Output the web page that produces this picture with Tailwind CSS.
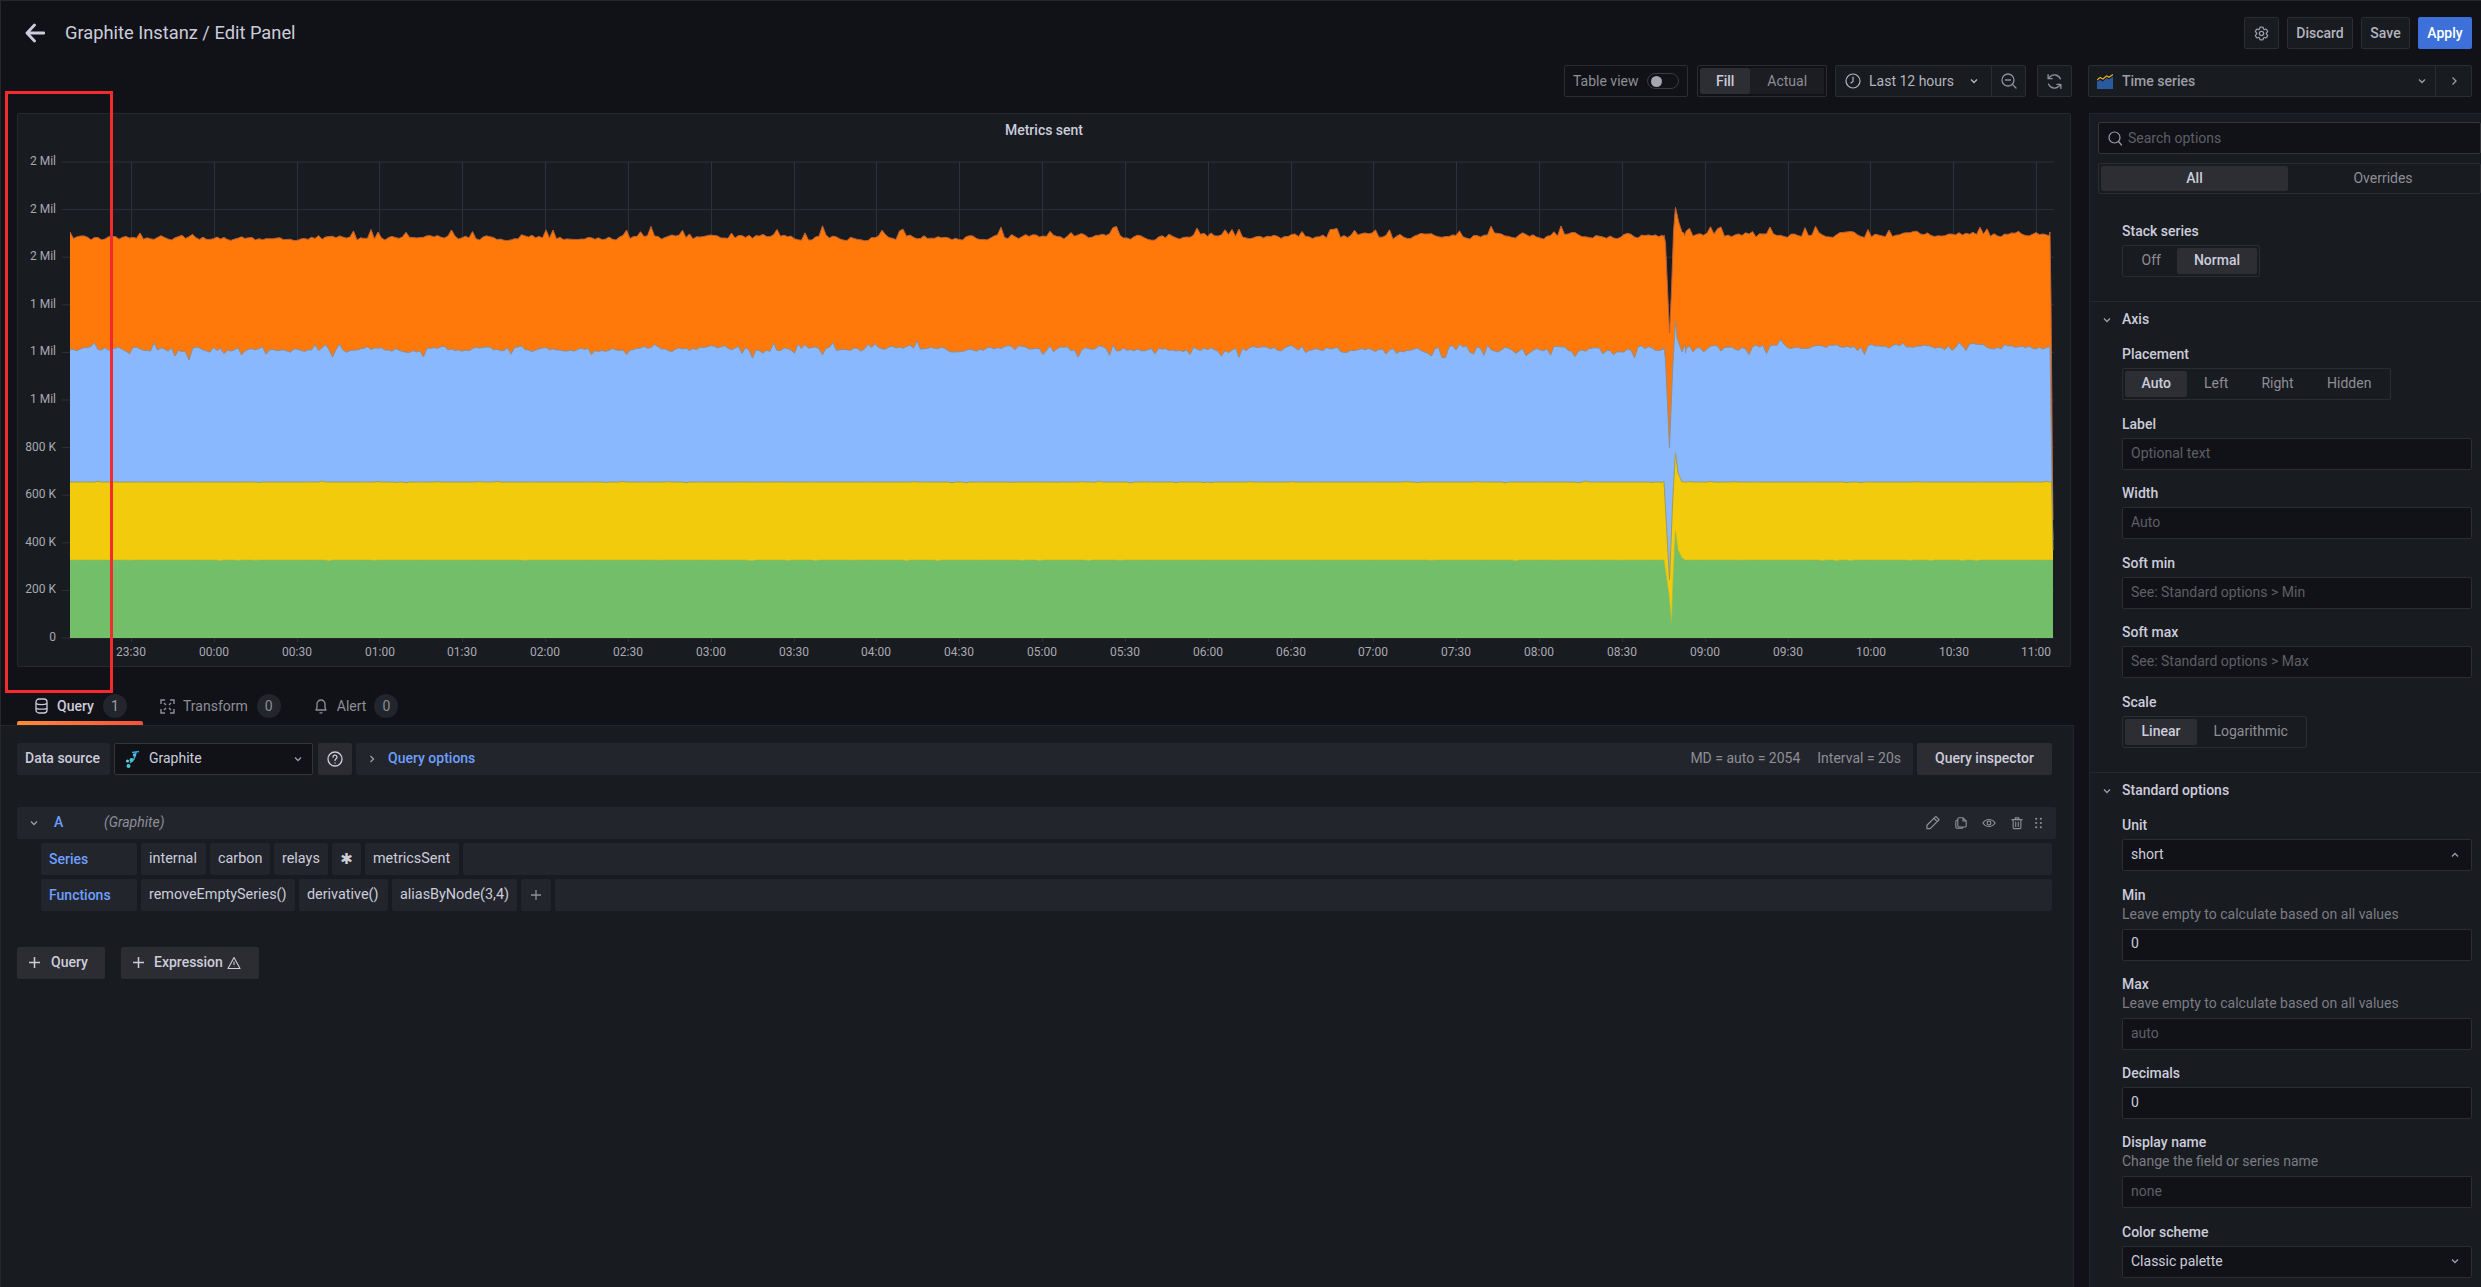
<!DOCTYPE html>
<html lang="en">
<head>
    <meta charset="UTF-8">
    <title>Graphite Instanz / Edit Panel</title>
    <script src="https://cdn.jsdelivr.net/npm/@tailwindcss/browser@4"></script>
</head>
<body class="bg-[#111217]">
<div class="relative w-[2481px] h-[1287px] overflow-hidden bg-[#111217] text-[#ccccdc] text-[14px] font-['Roboto',sans-serif]">

    <!-- Red annotation box -->
    <div class="absolute left-[5px] top-[91px] w-[108px] h-[602px] border-[3px] border-[#f42a2e] z-10"></div>
    <!-- Faint edge of the captured window -->
    <div class="absolute inset-0 border-l border-t border-[#2a2529] pointer-events-none z-10"></div>

    <!-- Header -->
    <div class="h-[65px] pt-[17px] pl-[25px] pr-[9px] flex items-start">
        <div class="h-[32px] flex items-center">
            <svg class="w-[20px] h-[20px] text-[#ccccdc]" viewBox="0 0 20 20" fill="none" stroke="currentColor" stroke-width="2.8" stroke-linecap="round" stroke-linejoin="round"><path d="M9.5 2 2 10l7.5 8M2.500 10H19"/></svg>
            <span class="ml-[20px] pb-[1px] text-[18.3px] text-[#ccccdc]">Graphite Instanz / Edit Panel</span>
        </div>
        <div class="ml-auto flex items-center gap-[8px] font-medium">
            <button class="w-[35px] h-[32px] flex items-center justify-center rounded-[2px] border border-[#2b2d33] bg-[#181b1f] text-[#9d9da8]">
                <svg class="w-[17px] h-[17px]" viewBox="0 0 24 24" fill="none" stroke="currentColor" stroke-width="1.8"><path d="M9.594 3.94c.09-.542.56-.94 1.11-.94h2.593c.55 0 1.02.398 1.11.94l.213 1.281c.063.374.313.686.645.87.074.04.147.083.22.127.325.196.72.257 1.075.124l1.217-.456a1.125 1.125 0 0 1 1.37.49l1.296 2.247a1.125 1.125 0 0 1-.26 1.431l-1.003.827c-.293.241-.438.613-.43.992a7.723 7.723 0 0 1 0 .255c-.008.378.137.75.43.991l1.004.827c.424.35.534.955.26 1.43l-1.298 2.247a1.125 1.125 0 0 1-1.369.491l-1.217-.456c-.355-.133-.75-.072-1.076.124a6.47 6.47 0 0 1-.22.128c-.331.183-.581.495-.644.869l-.213 1.281c-.09.543-.56.94-1.11.94h-2.594c-.55 0-1.019-.398-1.11-.94l-.213-1.281c-.062-.374-.312-.686-.644-.87a6.52 6.52 0 0 1-.22-.127c-.325-.196-.72-.257-1.076-.124l-1.217.456a1.125 1.125 0 0 1-1.369-.49l-1.297-2.247a1.125 1.125 0 0 1 .26-1.431l1.004-.827c.292-.24.437-.613.43-.991a6.932 6.932 0 0 1 0-.255c.007-.38-.138-.751-.43-.992l-1.004-.827a1.125 1.125 0 0 1-.26-1.43l1.297-2.247a1.125 1.125 0 0 1 1.37-.491l1.216.456c.356.133.751.072 1.076-.124.072-.044.146-.086.22-.128.332-.183.582-.495.644-.869l.214-1.28Z"/><circle cx="12" cy="12" r="3"/></svg>
            </button>
            <button class="w-[66px] h-[32px] rounded-[2px] border border-[#2b2d33] bg-[#181b1f] text-[#b4b4bf]">Discard</button>
            <button class="w-[49px] h-[32px] rounded-[2px] border border-[#2b2d33] bg-[#181b1f] text-[#b4b4bf]">Save</button>
            <button class="w-[54px] h-[32px] rounded-[2px] bg-[#3d71d9] text-white">Apply</button>
        </div>
    </div>

    <div class="flex h-[1222px]">
        <!-- Left column -->
        <div class="w-[2088px] shrink-0 flex flex-col">
            <!-- Toolbar -->
            <div class="h-[32px] pr-[16px] flex justify-end items-center text-[#8e8e98]">
                <div class="w-[124px] h-[32px] pl-[8px] flex items-center rounded-[2px] border border-[#2b2d33]">
                    <span>Table view</span>
                    <span class="ml-[8px] w-[32px] h-[16px] pl-[3px] flex items-center rounded-full border border-[#383a40]"><span class="w-[11px] h-[11px] rounded-full bg-[#a5a5ad]"></span></span>
                </div>
                <div class="ml-[9px] w-[130px] h-[32px] p-[2px] flex rounded-[2px] border border-[#2b2d33]">
                    <span class="px-[16px] flex items-center bg-[#2c2e34] rounded-[2px] text-[#ccccdc] font-medium">Fill</span>
                    <span class="flex-1 flex items-center justify-center bg-[#1b1d22]">Actual</span>
                </div>
                <div class="ml-[8px] w-[191px] h-[32px] flex items-center rounded-[2px] border border-[#2b2d33] bg-[#181b1f]">
                    <div class="w-[156px] h-full pl-[9px] pr-[12px] flex items-center border-r border-[#2b2d33] text-[#b4b4bf]">
                        <svg class="w-[16px] h-[16px]" viewBox="0 0 16 16" fill="none" stroke="currentColor" stroke-width="1.2" stroke-linecap="round"><circle cx="8" cy="8" r="7"/><path d="M8 4v4.500L6 10"/></svg>
                        <span class="ml-[8px]">Last 12 hours</span>
                        <svg class="ml-auto w-[10px] h-[10px]" viewBox="0 0 10 10" fill="none" stroke="currentColor" stroke-width="1.400"><path d="m2 3.500 3 3 3-3"/></svg>
                    </div>
                    <svg class="ml-[9px] w-[16px] h-[16px]" viewBox="0 0 16 16" fill="none" stroke="currentColor" stroke-width="1.300" stroke-linecap="round"><circle cx="7" cy="7" r="6"/><path d="M4.500 7h5M11.500 11.500 15 15"/></svg>
                </div>
                <div class="ml-[11px] w-[35px] h-[32px] flex items-center justify-center rounded-[2px] border border-[#2b2d33] bg-[#181b1f]">
                    <svg class="w-[17px] h-[17px]" viewBox="0 0 16 16" fill="none" stroke="currentColor" stroke-width="1.300" stroke-linecap="round" stroke-linejoin="round"><path d="M13.500 5.500A6 6 0 0 0 3.600 3.700L2 5.300M2 1.500v3.800h3.800M2.500 10.500a6 6 0 0 0 9.900 1.800l1.600-1.600M14 14.500v-3.800h-3.800"/></svg>
                </div>
            </div>

            <!-- Chart panel -->
            <div class="mt-[16px] ml-[17px] w-[2054px] h-[554px] flex flex-col shrink-0 rounded-[2px] border border-[#26282e] bg-[#181b1f]">
                <div class="h-[34px] pb-[1px] shrink-0 flex items-center justify-center font-medium">Metrics sent</div>
                <svg class="block" width="2052" height="518" viewBox="18 148 2052 518" font-family="Roboto, sans-serif">
                    <path id="grid" fill="none" stroke="#2e3137" stroke-width="1"/>
                    <path id="s-orange" fill="#ff780a"/>
                    <path id="e-orange" fill="none" stroke="#b8603a" stroke-width="1"/>
                    <path id="s-blue" fill="#8ab8ff"/>
                    <path id="e-blue" fill="none" stroke="#8e8f8f" stroke-width="1"/>
                    <path id="s-yellow" fill="#f2cc0c"/>
                    <path id="e-yellow" fill="none" stroke="#a09c50" stroke-width="1"/>
                    <path id="s-green" fill="#73bf69"/>
                    <path id="e-green" fill="none" stroke="#a8b840" stroke-width="0.6"/>
                    <g fill="#a9a9b3" font-size="12" text-anchor="end">
                        <text x="56" y="165">2 Mil</text>
                        <text x="56" y="213">2 Mil</text>
                        <text x="56" y="260">2 Mil</text>
                        <text x="56" y="308">1 Mil</text>
                        <text x="56" y="355">1 Mil</text>
                        <text x="56" y="403">1 Mil</text>
                        <text x="56" y="451">800 K</text>
                        <text x="56" y="498">600 K</text>
                        <text x="56" y="546">400 K</text>
                        <text x="56" y="593">200 K</text>
                        <text x="56" y="641">0</text>
                    </g>
                    <g fill="#a9a9b3" font-size="12" text-anchor="middle">
                        <text x="131" y="656">23:30</text>
                        <text x="214" y="656">00:00</text>
                        <text x="297" y="656">00:30</text>
                        <text x="380" y="656">01:00</text>
                        <text x="462" y="656">01:30</text>
                        <text x="545" y="656">02:00</text>
                        <text x="628" y="656">02:30</text>
                        <text x="711" y="656">03:00</text>
                        <text x="794" y="656">03:30</text>
                        <text x="876" y="656">04:00</text>
                        <text x="959" y="656">04:30</text>
                        <text x="1042" y="656">05:00</text>
                        <text x="1125" y="656">05:30</text>
                        <text x="1208" y="656">06:00</text>
                        <text x="1291" y="656">06:30</text>
                        <text x="1373" y="656">07:00</text>
                        <text x="1456" y="656">07:30</text>
                        <text x="1539" y="656">08:00</text>
                        <text x="1622" y="656">08:30</text>
                        <text x="1705" y="656">09:00</text>
                        <text x="1788" y="656">09:30</text>
                        <text x="1871" y="656">10:00</text>
                        <text x="1954" y="656">10:30</text>
                        <text x="2036" y="656">11:00</text>
                    </g>
                </svg>
            </div>

            <!-- Tabs -->
            <div class="ml-[17px] h-[58px] flex shrink-0 text-[#8e8e98]">
                <div class="relative h-[58px] pt-[20px] pl-[18px] pr-[16px] w-[126px]">
                    <div class="h-[38px] flex items-center text-[#ccccdc] font-medium">
                        <svg class="w-[13px] h-[16px]" viewBox="0 0 13 16" fill="none" stroke="currentColor" stroke-width="1.300"><rect x="1" y="1" width="11" height="14" rx="3"/><path d="M1 5.700c2.500 1.200 8.500 1.200 11 0M1 10.300c2.500 1.200 8.500 1.200 11 0"/></svg>
                        <span class="ml-[9px]">Query</span>
                        <span class="ml-[9px] w-[24px] h-[24px] rounded-full bg-[#22252b] flex items-center justify-center font-normal text-[#9d9da8]">1</span>
                    </div>
                    <div class="absolute left-0 right-0 bottom-0 h-[4px] rounded-t-[2px] bg-linear-to-r from-[#ff8a35] to-[#f5503a]"></div>
                </div>
                <div class="h-[58px] pt-[20px] pl-[17px] pr-[16px]">
                    <div class="h-[38px] flex items-center">
                        <svg class="w-[15px] h-[15px]" viewBox="0 0 15 15" fill="none" stroke="currentColor" stroke-width="1.400"><path d="M1 5V1h4M10 1h4v4M14 10v4h-4M5 14H1v-4M4 4l2 2M11 4 9 6M11 11 9 9M4 11l2-2"/></svg>
                        <span class="ml-[8px]">Transform</span>
                        <span class="ml-[9px] w-[24px] h-[24px] rounded-full bg-[#22252b] flex items-center justify-center">0</span>
                    </div>
                </div>
                <div class="h-[58px] pt-[20px] pl-[18px]">
                    <div class="h-[38px] flex items-center">
                        <svg class="w-[12px] h-[15px]" viewBox="0 0 12 15" fill="none" stroke="currentColor" stroke-width="1.300" stroke-linejoin="round"><path d="M6 1a4 4 0 0 0-4 4v3.500L1 11h10L10 8.500V5a4 4 0 0 0-4-4ZM4.500 13.800h3"/></svg>
                        <span class="ml-[10px]">Alert</span>
                        <span class="ml-[8px] w-[24px] h-[24px] rounded-full bg-[#22252b] flex items-center justify-center">0</span>
                    </div>
                </div>
            </div>

            <!-- Query section -->
            <div class="flex-1 w-[2074px] pt-[17px] pl-[17px] pr-[17px] bg-[#181b1f] border-t border-r border-[#22252b]">
                <div class="h-[32px] pr-[4px] flex gap-[4px]">
                    <div class="w-[93px] pb-[1px] flex items-center pl-[8px] rounded-[2px] bg-[#22252b] font-medium">Data source</div>
                    <div class="w-[199px] pb-[1px] flex items-center pl-[10px] rounded-[2px] bg-[#111217] border border-[#33353b]">
                        <svg class="w-[15px] h-[20px]" viewBox="0 0 15 20" fill="none"><path d="M7 3.500 14 2.500M11.500 2.500 9 10 5 14" stroke="#33a2e5" stroke-width="1.500"/><circle cx="9.500" cy="6" r="1.700" fill="#4fc4cf"/><circle cx="6.500" cy="11" r="2" fill="#4fc4cf"/><circle cx="2.500" cy="12" r="1.500" fill="#6ed0e0"/><circle cx="3.500" cy="17" r="2" fill="#4fc4cf"/></svg>
                        <span class="ml-[9px] text-[#ccccdc]">Graphite</span>
                        <svg class="ml-auto mr-[9px] w-[10px] h-[10px] text-[#9d9da8]" viewBox="0 0 10 10" fill="none" stroke="currentColor" stroke-width="1.300"><path d="m2 3.500 3 3 3-3"/></svg>
                    </div>
                    <div class="w-[34px] ml-[1px] flex items-center justify-center rounded-[2px] bg-[#2a2c32] text-[#ccccdc]">
                        <svg class="w-[16px] h-[16px]" viewBox="0 0 16 16" fill="none" stroke="currentColor" stroke-width="1.300" stroke-linecap="round"><circle cx="8" cy="8" r="7"/><path d="M6 6.200a2 2 0 1 1 3 1.700c-.7.400-1 .8-1 1.500M8 11.800v.2"/></svg>
                    </div>
                    <div class="flex-1 pb-[1px] flex items-center pl-[11px] pr-[12px] rounded-[2px] bg-[#22252b]">
                        <svg class="w-[10px] h-[10px] text-[#9d9da8]" viewBox="0 0 10 10" fill="none" stroke="currentColor" stroke-width="1.300"><path d="m3.500 2 3 3-3 3"/></svg>
                        <span class="ml-[11px] text-[#6e9fff] font-medium">Query options</span>
                        <span class="ml-auto text-[#8e8e98]">MD = auto = 2054</span>
                        <span class="ml-[17px] text-[#8e8e98]">Interval = 20s</span>
                    </div>
                    <button class="w-[135px] pb-[1px] rounded-[2px] bg-[#2c2d33] font-medium">Query inspector</button>
                </div>

                <div class="mt-[32px] h-[32px] pb-[1px] flex items-center rounded-[2px] bg-[#22252b] pl-[12px] pr-[14px]">
                    <svg class="w-[10px] h-[10px] text-[#9d9da8]" viewBox="0 0 10 10" fill="none" stroke="currentColor" stroke-width="1.300"><path d="m2 3.500 3 3 3-3"/></svg>
                    <span class="ml-[15px] w-[50px] text-[#6e9fff] font-medium">A</span>
                    <span class="italic text-[#8e8e98]">(Graphite)</span>
                    <div class="ml-auto flex items-center gap-[15px] text-[#8e8e98]">
                        <svg class="w-[14px] h-[15px]" viewBox="0 0 15 15" fill="none" stroke="currentColor" stroke-width="1.300" stroke-linejoin="round"><path d="M1 14v-3.500L10.500 1 14 4.500 4.500 14H1ZM8.500 3l3.500 3.500"/></svg>
                        <svg class="w-[12px] h-[14px]" viewBox="0 0 15 15" fill="none" stroke="currentColor" stroke-width="1.400" stroke-linejoin="round"><path d="M5 1h5l4 4v6a1.500 1.500 0 0 1-1.500 1.500H5A1.500 1.500 0 0 1 3.500 11V2.500A1.500 1.500 0 0 1 5 1ZM10 1v4h4M3.500 4H2.500A1.500 1.500 0 0 0 1 5.500v7A1.500 1.500 0 0 0 2.500 14h6a1.500 1.500 0 0 0 1.500-1.500"/></svg>
                        <svg class="w-[14px] h-[14px]" viewBox="0 0 15 15" fill="none" stroke="currentColor" stroke-width="1.300"><path d="M1 7.500C4.500 2.500 10.500 2.500 14 7.500 10.500 12.500 4.500 12.500 1 7.500Z"/><circle cx="7.500" cy="7.500" r="2"/></svg>
                        <svg class="w-[12px] h-[14px]" viewBox="0 0 14 15" fill="none" stroke="currentColor" stroke-width="1.300" stroke-linecap="round"><path d="M1 3.500h12M5 3.500V1.500h4v2M2.500 3.500V13a1 1 0 0 0 1 1h7a1 1 0 0 0 1-1V3.500M5.500 6.500v5M8.500 6.500v5"/></svg>
                        <svg class="-ml-[3px] w-[7px] h-[14px]" viewBox="0 0 9 15" fill="currentColor"><circle cx="1.500" cy="2" r="1.400"/><circle cx="7.500" cy="2" r="1.400"/><circle cx="1.500" cy="7.500" r="1.400"/><circle cx="7.500" cy="7.500" r="1.400"/><circle cx="1.500" cy="13" r="1.400"/><circle cx="7.500" cy="13" r="1.400"/></svg>
                    </div>
                </div>

                <div class="mt-[4px] ml-[24px] mr-[4px] h-[32px] flex gap-[4px] text-[14.4px]">
                    <div class="w-[96px] pl-[8px] flex items-center rounded-[2px] bg-[#22252b] text-[#6e9fff] text-[14px] font-medium">Series</div>
                    <div class="w-[65px] pl-[8px] flex items-center rounded-[2px] bg-[#22252b]">internal</div>
                    <div class="w-[60px] pl-[8px] flex items-center rounded-[2px] bg-[#22252b]">carbon</div>
                    <div class="w-[54px] pl-[8px] flex items-center rounded-[2px] bg-[#22252b]">relays</div>
                    <div class="w-[29px] flex items-center justify-center rounded-[2px] bg-[#22252b] font-['DejaVu_Sans',sans-serif] text-[15px]">✱</div>
                    <div class="w-[94px] pl-[8px] flex items-center rounded-[2px] bg-[#22252b]">metricsSent</div>
                    <div class="flex-1 rounded-[2px] bg-[#22252b]"></div>
                </div>
                <div class="mt-[4px] ml-[24px] mr-[4px] h-[32px] flex gap-[4px] text-[14.4px]">
                    <div class="w-[96px] pl-[8px] flex items-center rounded-[2px] bg-[#22252b] text-[#6e9fff] text-[14px] font-medium">Functions</div>
                    <div class="w-[154px] pl-[8px] flex items-center rounded-[2px] bg-[#22252b]">removeEmptySeries()</div>
                    <div class="w-[89px] pl-[8px] flex items-center rounded-[2px] bg-[#22252b]">derivative()</div>
                    <div class="w-[125px] pl-[8px] flex items-center rounded-[2px] bg-[#22252b]">aliasByNode(3,4)</div>
                    <div class="w-[30px] flex items-center justify-center rounded-[2px] bg-[#22252b] text-[#8e8e98]">
                        <svg class="w-[10px] h-[10px]" viewBox="0 0 10 10" stroke="currentColor" stroke-width="1.300"><path d="M5 0v10M0 5h10"/></svg>
                    </div>
                    <div class="flex-1 rounded-[2px] bg-[#22252b]"></div>
                </div>

                <div class="mt-[36px] h-[32px] flex gap-[16px] font-medium">
                    <button class="w-[88px] pb-[1px] pl-[12px] flex items-center rounded-[2px] bg-[#2c2d33]">
                        <svg class="w-[11px] h-[11px]" viewBox="0 0 11 11" stroke="currentColor" stroke-width="1.500"><path d="M5.500 0v11M0 5.500h11"/></svg>
                        <span class="ml-[11px]">Query</span>
                    </button>
                    <button class="w-[138px] pb-[1px] pl-[12px] flex items-center rounded-[2px] bg-[#2c2d33]">
                        <svg class="w-[11px] h-[11px]" viewBox="0 0 11 11" stroke="currentColor" stroke-width="1.500"><path d="M5.500 0v11M0 5.500h11"/></svg>
                        <span class="ml-[10px]">Expression</span>
                        <svg class="ml-[4px] w-[14px] h-[14px]" viewBox="0 0 14 14" fill="none" stroke="currentColor" stroke-width="1.100" stroke-linejoin="round"><path d="M7 1.500 13 12.500H1L7 1.500ZM7 5.500v3.500M7 10.500v.3"/></svg>
                    </button>
                </div>
            </div>
        </div>

        <!-- Right column -->
        <div class="flex-1 min-w-0 flex flex-col">
            <div class="mr-[9px] h-[32px] flex items-center rounded-[2px] border border-[#2b2d33] bg-[#181b1f] text-[#9d9da8] shrink-0">
                <div class="flex-1 h-full pl-[8px] flex items-center border-r border-[#2b2d33]">
                    <svg class="w-[16px] h-[15px]" viewBox="0 0 16 15"><path d="M0 7.500 3 6l3 1.500L9.500 4l2.500 1.500L16 2.500V15H0Z" fill="#2a5a9e"/><path d="M0 6 3 3.500l3 1.500L9.500 2l2.500 1.200L16 .5" fill="none" stroke="#e8a620" stroke-width="1.300"/></svg>
                    <span class="ml-[9px] font-medium">Time series</span>
                    <svg class="ml-auto mr-[8px] w-[10px] h-[10px]" viewBox="0 0 10 10" fill="none" stroke="currentColor" stroke-width="1.300"><path d="m2 3.500 3 3 3-3"/></svg>
                </div>
                <div class="w-[35px] flex items-center justify-center">
                    <svg class="w-[10px] h-[10px]" viewBox="0 0 10 10" fill="none" stroke="currentColor" stroke-width="1.300"><path d="m3.500 1.500 3.500 3.500-3.500 3.500"/></svg>
                </div>
            </div>

            <div class="mt-[16px] ml-[1px] flex-1 min-h-0 w-[392px] pt-[8px] bg-[#181b1f] border-l border-t border-[#22252b] overflow-hidden">
                <div class="ml-[8px] w-[383px] h-[32px] pl-[9px] flex items-center rounded-[2px] bg-[#111217] border border-[#33353b]">
                    <svg class="w-[14px] h-[15px] text-[#9d9da8]" viewBox="0 0 14 15" fill="none" stroke="currentColor" stroke-width="1.200" stroke-linecap="round"><circle cx="6.500" cy="6.500" r="5.500"/><path d="m10.500 10.500 3 3.500"/></svg>
                    <span class="ml-[6px] text-[#5e5f66]">Search options</span>
                </div>
                <div class="mt-[8.500px] ml-[8px] w-[383px] h-[31px] p-[2px] flex rounded-[2px] border border-[#2b2d33]">
                    <div class="w-[187px] flex items-center justify-center rounded-[2px] bg-[#2c2e34] font-medium">All</div>
                    <div class="flex-1 flex items-center justify-center text-[#8e8e98]">Overrides</div>
                </div>

                <div class="mt-[27.500px] ml-[32px] h-[20px] flex items-center font-medium">Stack series</div>
                <div class="mt-[3.500px] ml-[32px] w-fit h-[32px] p-[2px] flex rounded-[2px] border border-[#2b2d33] text-[#8e8e98]">
                    <div class="px-[16.500px] flex items-center">Off</div>
                    <div class="px-[16.500px] flex items-center rounded-[2px] bg-[#2c2e34] text-[#ccccdc] font-medium">Normal</div>
                </div>

                <!-- Axis -->
                <div class="mt-[24px] border-t border-[#26282e] pt-[8px] pb-[24px]">
                    <div class="h-[20px] mb-[15px] pl-[12px] flex items-center font-medium">
                        <svg class="w-[10px] h-[10px] text-[#9d9da8]" viewBox="0 0 10 10" fill="none" stroke="currentColor" stroke-width="1.300"><path d="m2 3.500 3 3 3-3"/></svg>
                        <span class="ml-[10px]">Axis</span>
                    </div>
                    <div class="ml-[32px] w-[350px]">
                        <div class="h-[20px] mb-[3px] flex items-center font-medium">Placement</div>
                        <div class="w-fit h-[32px] mb-[14.500px] p-[2px] flex rounded-[2px] border border-[#2b2d33] text-[#8e8e98]">
                            <div class="px-[16.500px] flex items-center rounded-[2px] bg-[#2c2e34] text-[#ccccdc] font-medium">Auto</div>
                            <div class="px-[16.500px] flex items-center">Left</div>
                            <div class="px-[16.500px] flex items-center">Right</div>
                            <div class="px-[17px] flex items-center">Hidden</div>
                        </div>
                        <div class="h-[20px] mb-[3.500px] flex items-center font-medium">Label</div>
                        <div class="h-[32px] mb-[14px] pl-[8px] flex items-center rounded-[2px] bg-[#111217] border border-[#2b2d33] text-[#5e5f66]">Optional text</div>
                        <div class="h-[20px] mb-[3.500px] flex items-center font-medium">Width</div>
                        <div class="h-[32px] mb-[14px] pl-[8px] pb-[1px] flex items-center rounded-[2px] bg-[#111217] border border-[#2b2d33] text-[#5e5f66]">Auto</div>
                        <div class="h-[20px] mb-[3.500px] flex items-center font-medium">Soft min</div>
                        <div class="h-[32px] mb-[14px] pl-[8px] flex items-center rounded-[2px] bg-[#111217] border border-[#2b2d33] text-[#5e5f66]">See: Standard options &gt; Min</div>
                        <div class="h-[20px] mb-[3.500px] flex items-center font-medium">Soft max</div>
                        <div class="h-[32px] mb-[14px] pl-[8px] pb-[1px] flex items-center rounded-[2px] bg-[#111217] border border-[#2b2d33] text-[#5e5f66]">See: Standard options &gt; Max</div>
                        <div class="h-[20px] mb-[3.500px] flex items-center font-medium">Scale</div>
                        <div class="w-fit h-[32px] p-[2px] flex rounded-[2px] border border-[#2b2d33] text-[#8e8e98]">
                            <div class="px-[16.500px] flex items-center rounded-[2px] bg-[#2c2e34] text-[#ccccdc] font-medium">Linear</div>
                            <div class="px-[16.500px] flex items-center">Logarithmic</div>
                        </div>
                    </div>
                </div>

                <!-- Standard options -->
                <div class="border-t border-[#26282e] pt-[8px]">
                    <div class="h-[20px] mb-[15px] pl-[12px] flex items-center font-medium">
                        <svg class="w-[10px] h-[10px] text-[#9d9da8]" viewBox="0 0 10 10" fill="none" stroke="currentColor" stroke-width="1.300"><path d="m2 3.500 3 3 3-3"/></svg>
                        <span class="ml-[10px]">Standard options</span>
                    </div>
                    <div class="ml-[32px] w-[350px]">
                        <div class="h-[20px] mb-[3.500px] flex items-center font-medium">Unit</div>
                        <div class="h-[32px] mb-[14px] pl-[8px] pr-[11px] pb-[1px] flex items-center justify-between rounded-[2px] bg-[#111217] border border-[#2b2d33]">
                            <span>short</span>
                            <svg class="w-[10px] h-[10px] text-[#9d9da8]" viewBox="0 0 10 10" fill="none" stroke="currentColor" stroke-width="1.300"><path d="m2 6.500 3-3 3 3"/></svg>
                        </div>
                        <div class="h-[20px] flex items-center font-medium">Min</div>
                        <div class="h-[18px] mb-[5.500px] flex items-center text-[#7c7c86]">Leave empty to calculate based on all values</div>
                        <div class="h-[32px] mb-[14px] pl-[8px] pb-[2px] flex items-center rounded-[2px] bg-[#111217] border border-[#2b2d33]">0</div>
                        <div class="h-[20px] flex items-center font-medium">Max</div>
                        <div class="h-[18px] mb-[5.500px] flex items-center text-[#7c7c86]">Leave empty to calculate based on all values</div>
                        <div class="h-[32px] mb-[13px] pl-[8px] pb-[2px] flex items-center rounded-[2px] bg-[#111217] border border-[#2b2d33] text-[#5e5f66]">auto</div>
                        <div class="h-[20px] mb-[3.500px] flex items-center font-medium">Decimals</div>
                        <div class="h-[32px] mb-[14px] pl-[8px] pb-[1px] flex items-center rounded-[2px] bg-[#111217] border border-[#2b2d33]">0</div>
                        <div class="h-[20px] flex items-center font-medium">Display name</div>
                        <div class="h-[18px] mb-[5.500px] flex items-center text-[#7c7c86]">Change the field or series name</div>
                        <div class="h-[32px] mb-[14px] pl-[8px] pb-[1px] flex items-center rounded-[2px] bg-[#111217] border border-[#2b2d33] text-[#5e5f66]">none</div>
                        <div class="h-[20px] mb-[3.500px] flex items-center font-medium">Color scheme</div>
                        <div class="h-[32px] pl-[8px] pr-[11px] pb-[1px] flex items-center justify-between rounded-[2px] bg-[#111217] border border-[#2b2d33]">
                            <span>Classic palette</span>
                            <svg class="w-[10px] h-[10px] text-[#9d9da8]" viewBox="0 0 10 10" fill="none" stroke="currentColor" stroke-width="1.300"><path d="m2 3.500 3 3 3-3"/></svg>
                        </div>
                    </div>
                </div>
            </div>
        </div>
    </div>
</div>

<script>
    // seeded noise so the chart is the same on every render
    let seed = 1234567;
    function rnd() {
        seed = (seed + 0x6D2B79F5) | 0;
        let t = Math.imul(seed ^ (seed >>> 15), 1 | seed);
        t = (t + Math.imul(t ^ (t >>> 7), 61 | t)) ^ t;
        return ((t ^ (t >>> 14)) >>> 0) / 4294967296;
    }

    const X0 = 70, X1 = 2053, BASE = 638;

    // grid lines
    let grid = '';
    for (let i = 0; i <= 10; i++) {
        const y = 162 + i * 47.6;
        grid += 'M62 ' + y + 'H2054';
    }
    for (let i = 0; i < 24; i++) {
        const x = Math.round(131 + i * 82.83) + 0.5;
        grid += 'M' + x + ' 162V642';
    }
    document.getElementById('grid').setAttribute('d', grid);

    const xs = [];
    for (let x = X0; x < 1662; x += 3.5) xs.push(x);
    for (let x = 1662; x < 1686; x += 0.5) xs.push(x);
    for (let x = 1686; x < 2049; x += 3.5) xs.push(x);
    for (let x = 2049; x <= X1; x += 0.5) xs.push(x);

    let walkO = 0, walkB = 0;

    function orangeNoise(x) {
        const base = x < 1664 ? 238.5 - 3 * (x - X0) / 1600 : 234;
        walkO = walkO * 0.55 + (rnd() - 0.5) * 4.5;
        let y = base + walkO;
        const r = rnd();
        if (r < 0.13) y -= 3 + rnd() * 6;
        return y;
    }
    function blueNoise(x) {
        const base = x < 1664 ? 349 : 347;
        walkB = walkB * 0.55 + (rnd() - 0.5) * 4.5;
        let y = base + walkB;
        const r = rnd();
        if (r < 0.1) y += 3 + rnd() * 6;
        else if (r < 0.18) y -= 2 + rnd() * 4;
        return y;
    }
    function yellowNoise() {
        return 482 + (rnd() < 0.1 ? (rnd() - 0.5) * 2 : 0);
    }
    function greenNoise() {
        return 560 + (rnd() < 0.07 ? rnd() * 1 : 0);
    }

    // the dip around 08:50 and the drop at the right edge
    const dips = {
        orange: [[1664, 235], [1665.500, 243], [1669.500, 333], [1671.500, 290], [1673.500, 232], [1675.400, 207], [1679, 223], [1682, 232], [1684, 233]],
        blue: [[1664, 347], [1665.500, 360], [1669.500, 448], [1672.500, 372], [1675.400, 320], [1677, 338], [1682, 352], [1684, 347]],
        yellow: [[1664, 482], [1669.500, 580], [1672.500, 505], [1675.400, 452], [1678, 473], [1682, 482]],
        green: [[1664, 560], [1669, 595], [1671.500, 623], [1673, 580], [1675.400, 530], [1678, 550], [1682, 558], [1685, 560]]
    };
    const tails = {
        orange: [[2050, 232], [2051, 300], [2052.500, 480], [2053, 520]],
        blue: [[2050, 347], [2051, 420], [2052.500, 520], [2053, 540]],
        yellow: [[2051.500, 482], [2053, 550]],
        green: [[2053, 560]]
    };

    function interp(keys, x) {
        for (let i = 1; i < keys.length; i++) {
            if (x <= keys[i][0]) {
                const a = keys[i - 1], b = keys[i];
                return a[1] + (b[1] - a[1]) * (x - a[0]) / (b[0] - a[0]);
            }
        }
        return keys[keys.length - 1][1];
    }

    function build(name, noise) {
        const dip = dips[name], tail = tails[name];
        let d = '';
        xs.forEach(function (x, i) {
            let y = noise(x);
            if (x >= dip[0][0] && x <= dip[dip.length - 1][0]) y = interp(dip, x);
            if (x >= tail[0][0]) y = interp(tail, x);
            if (name === 'orange' && i === 0) y = 232;
            d += (i ? 'L' : 'M') + x + ' ' + y.toFixed(1);
        });
        document.getElementById('e-' + name).setAttribute('d', d);
        document.getElementById('s-' + name).setAttribute('d', d + 'L' + X1 + ' ' + BASE + 'L' + X0 + ' ' + BASE + 'Z');
    }

    build('orange', orangeNoise);
    build('blue', blueNoise);
    build('yellow', yellowNoise);
    build('green', greenNoise);
</script>
</body>
</html>
